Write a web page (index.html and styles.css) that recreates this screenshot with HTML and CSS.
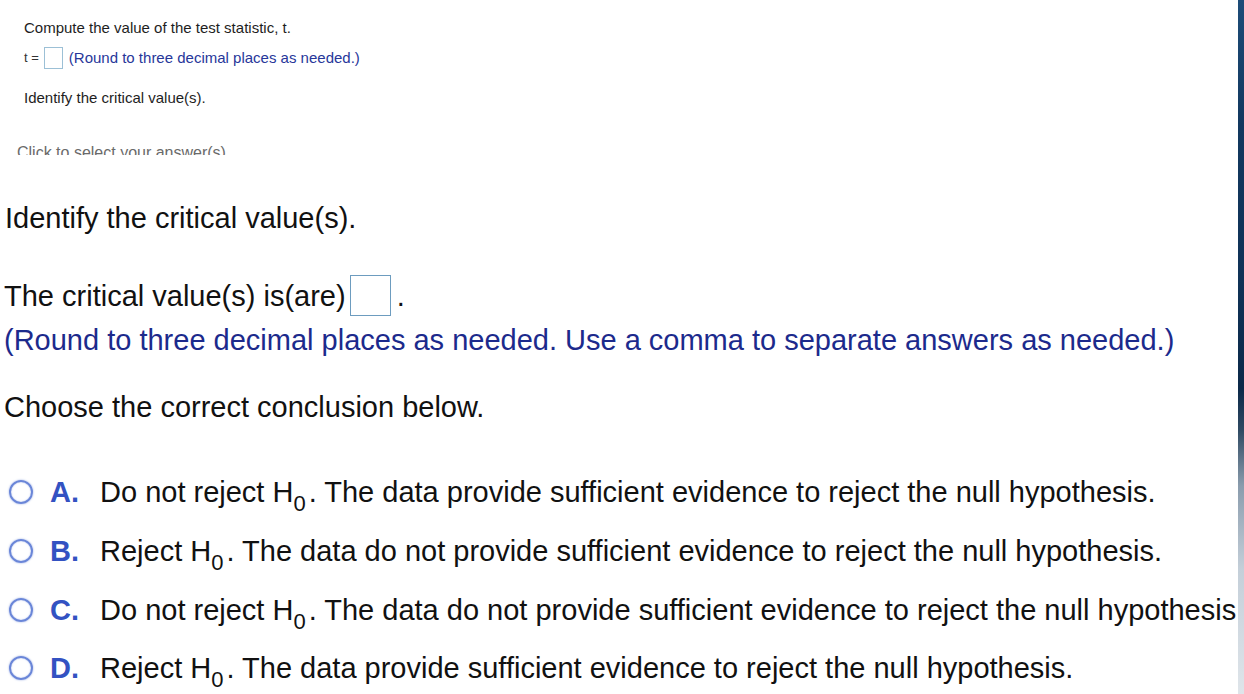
FILE: index.html
```html
<!DOCTYPE html>
<html lang="en">
<head>
<meta charset="utf-8">
<title>Hypothesis test</title>
<link rel="stylesheet" href="styles.css">
</head>
<body>
<div class="screen">
  <main class="page">
    <section class="mini">
      <p class="mini-line">Compute the value of the test statistic, t.</p>
      <div class="mini-answer"><span class="mini-var">t =</span><span class="mini-box"></span><span class="mini-hint">(Round to three decimal places as needed.)</span></div>
      <p class="mini-line mini-q">Identify the critical value(s).</p>
      <p class="mini-click">Click to select your answer(s)</p>
    </section>
    <section class="big">
      <p class="big-title">Identify the critical value(s).</p>
      <div class="crit"><span class="crit-text">The critical value(s) is(are)</span><span class="crit-box"></span><span class="crit-dot">.</span></div>
      <p class="hint">(Round to three decimal places as needed. Use a comma to separate answers as needed.)</p>
      <p class="choose">Choose the correct conclusion below.</p>
      <ul class="options">
        <li class="option"><span class="radio"></span><span class="opt-label">A.</span><span class="opt-text">Do not reject H<sub>0</sub>. The data provide sufficient evidence to reject the null hypothesis.</span></li>
        <li class="option"><span class="radio"></span><span class="opt-label">B.</span><span class="opt-text">Reject H<sub>0</sub>. The data do not provide sufficient evidence to reject the null hypothesis.</span></li>
        <li class="option"><span class="radio"></span><span class="opt-label">C.</span><span class="opt-text">Do not reject H<sub>0</sub>. The data do not provide sufficient evidence to reject the null hypothesis.</span></li>
        <li class="option"><span class="radio"></span><span class="opt-label">D.</span><span class="opt-text">Reject H<sub>0</sub>. The data provide sufficient evidence to reject the null hypothesis.</span></li>
      </ul>
    </section>
  </main>
  <div class="edge"></div>
</div>
</body>
</html>
```

FILE: styles.css
```css
html, body {
  margin: 0;
  padding: 0;
  background: #ffffff;
}

body {
  font-family: "Liberation Sans", Arial, sans-serif;
  color: #111111;
}

.screen {
  display: flex;
  width: 1244px;
  height: 694px;
  overflow: hidden;
}

.page {
  flex: 0 0 1238px;
  width: 1238px;
  height: 694px;
  overflow: hidden;
  background: #ffffff;
}

.edge {
  flex: 0 0 6px;
  height: 694px;
  background: linear-gradient(to bottom,
    #1d4c78 0%,
    #12385f 18%,
    #0f3257 40%,
    #0b2949 56%,
    #2f4a63 62%,
    #8a9cad 70%,
    #c4cfd9 82%,
    #dfe5ea 100%);
}

/* small top part */
.mini {
  height: 155px;
  box-sizing: border-box;
  padding: 18px 0 0 24px;
  overflow: hidden;
}

.mini-line {
  margin: 0;
  font-size: 15px;
  line-height: 20px;
  color: #1e1e1e;
  white-space: nowrap;
}

.mini-answer {
  margin-top: 9px;
  height: 22px;
  display: flex;
  align-items: center;
  font-size: 15px;
  line-height: 20px;
  white-space: nowrap;
}

.mini-var {
  font-size: 13px;
  color: #333333;
  margin-right: 5px;
}

.mini-box {
  width: 19px;
  height: 22px;
  box-sizing: border-box;
  border: 1px solid #9cc0d6;
  margin-right: 6px;
}

.mini-hint {
  color: #27379a;
}

.mini-q {
  margin-top: 19px;
}

.mini-click {
  margin: 35px 0 0 -7px;
  font-size: 16px;
  line-height: 20px;
  color: #6a6a6a;
  white-space: nowrap;
}

/* zoomed part */
.big {
  margin-top: 45px;
  padding-left: 5px;
  font-size: 29px;
  white-space: nowrap;
}

.big-title {
  margin: 0;
  line-height: 36px;
}

.crit {
  margin-top: 34px;
  display: flex;
  align-items: flex-start;
}

.crit-text {
  line-height: 36px;
  padding-top: 8px;
  margin-left: -1px;
}

.crit-box {
  width: 41px;
  height: 41px;
  box-sizing: border-box;
  margin: 5px 0 0 4px;
  border: 1.5px solid #6d9cbf;
}

.crit-dot {
  line-height: 36px;
  padding-top: 8px;
  margin-left: 6px;
}

.hint {
  margin: 7px 0 0 -1px;
  line-height: 34px;
  color: #1c2a8c;
}

.choose {
  margin: 32px 0 0 -1px;
  line-height: 36px;
}

.options {
  list-style: none;
  margin: 49px 0 0 0;
  padding: 0;
  display: flex;
  flex-direction: column;
  gap: 22.8px;
}

.option {
  display: flex;
  align-items: center;
  height: 36px;
  line-height: 36px;
}

.radio {
  flex: 0 0 auto;
  width: 24px;
  height: 24px;
  box-sizing: border-box;
  margin-left: 4px;
  border: 2.5px solid #6a86d8;
  border-radius: 50%;
  box-shadow: 0 0 2px rgba(100, 130, 214, 0.7), inset 0 0 1.5px rgba(100, 130, 214, 0.6);
}

.opt-label {
  flex: 0 0 50px;
  margin-left: 17px;
  font-weight: bold;
  color: #3352c2;
}

.opt-text sub {
  font-size: 22px;
  line-height: 0;
  vertical-align: -9px;
  margin-right: 3px;
}
```
